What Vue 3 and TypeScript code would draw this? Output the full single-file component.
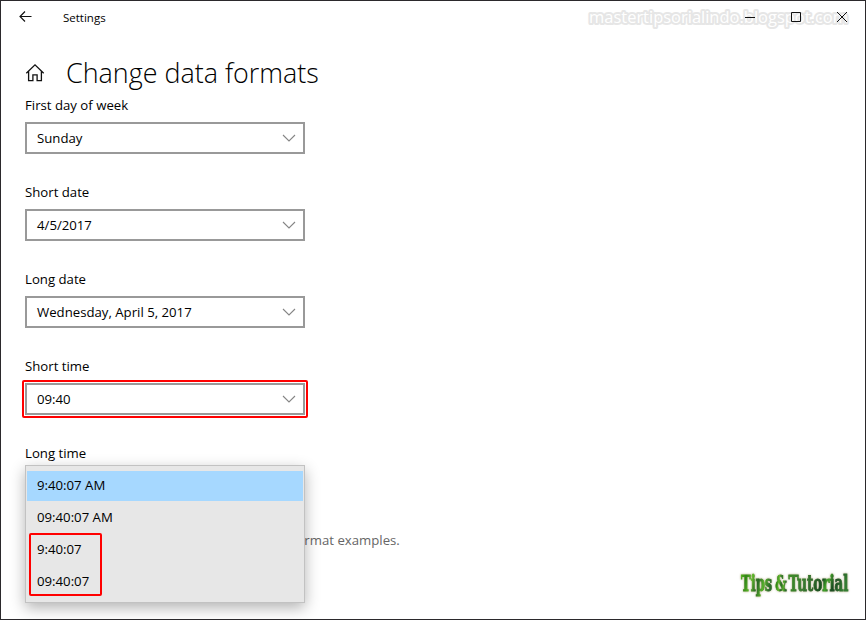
<script setup lang="ts">
interface Field {
  label: string
  value: string
  marked?: boolean
}

const fields: Field[] = [
  { label: 'First day of week', value: 'Sunday' },
  { label: 'Short date', value: '4/5/2017' },
  { label: 'Long date', value: 'Wednesday, April 5, 2017' },
  { label: 'Short time', value: '09:40', marked: true },
]

const options: string[] = ['9:40:07 AM', '09:40:07 AM', '9:40:07', '09:40:07']
const selected = 0
</script>

<template>
  <div class="window">
    <header class="titlebar">
      <svg class="back" width="14" height="12" viewBox="0 0 14 12">
        <path d="M12.5 5.5H1M6 .5L1 5.5l5 5" fill="none" stroke="#111" stroke-width="1.15" />
      </svg>
      <span class="app-name">Settings</span>
      <div class="controls">
        <svg width="12" height="12" viewBox="0 0 12 12"><path d="M1 6.5h10" /></svg>
        <svg width="12" height="12" viewBox="0 0 12 12"><path d="M1.5 1.5h9v9h-9z" /></svg>
        <svg width="12" height="12" viewBox="0 0 12 12"><path d="M1 1l10 10M11 1L1 11" /></svg>
      </div>
      <svg class="watermark" width="280" height="30" viewBox="0 0 280 30">
        <text x="5" y="18" textLength="259" lengthAdjust="spacingAndGlyphs">mastertipsorialindo.blogspot.com</text>
      </svg>
    </header>

    <main class="content">
      <div class="heading">
        <svg class="home" width="20" height="20" viewBox="0 0 20 20">
          <path d="M1.3 10.3L10 1.9l8.7 8.4M3.6 8.5v9.2h4.3v-5.9h4.2v5.9h4.3V8.5" fill="none" stroke="#111" stroke-width="1.3" />
        </svg>
        <h1>Change data formats</h1>
      </div>

      <section v-for="f in fields" :key="f.label" class="field">
        <label>{{ f.label }}</label>
        <div class="select" :class="{ marked: f.marked }">
          <span>{{ f.value }}</span>
          <svg width="14" height="8" viewBox="0 0 14 8">
            <path d="M1 1l6 6 6-6" fill="none" stroke="#858585" stroke-width="1.1" />
          </svg>
        </div>
      </section>

      <section class="field">
        <label>Long time</label>
        <div class="select">
          <ul class="menu">
            <li v-for="(o, i) in options" :key="o" :class="{ active: i === selected }">{{ o }}</li>
            <li class="mark" aria-hidden="true"></li>
          </ul>
        </div>
      </section>

      <p class="hint">format examples.</p>
    </main>

    <svg class="logo" width="122" height="36" viewBox="0 0 122 36">
      <defs>
        <linearGradient id="leaf" x1="0" y1="0" x2="1" y2="0.2">
          <stop offset="0" stop-color="#5dbb1d" />
          <stop offset="0.2" stop-color="#2f8415" />
          <stop offset="0.4" stop-color="#62b92d" />
          <stop offset="0.6" stop-color="#286525" />
          <stop offset="0.8" stop-color="#57b02a" />
          <stop offset="1" stop-color="#2c6a2a" />
        </linearGradient>
        <linearGradient id="forest" x1="0" y1="0" x2="1" y2="0.15">
          <stop offset="0" stop-color="#3e8c26" />
          <stop offset="0.3" stop-color="#397c30" />
          <stop offset="0.5" stop-color="#2b6428" />
          <stop offset="0.62" stop-color="#174d1e" />
          <stop offset="0.7" stop-color="#42a52a" />
          <stop offset="0.82" stop-color="#1b4921" />
          <stop offset="1" stop-color="#347c32" />
        </linearGradient>
      </defs>
      <g transform="scale(0.6 1)">
        <text x="10" y="22" textLength="52" lengthAdjust="spacingAndGlyphs" fill="url(#leaf)" stroke="url(#leaf)">Tips</text>
        <text x="67" y="22" textLength="19" lengthAdjust="spacingAndGlyphs" fill="url(#leaf)" stroke="url(#leaf)">&amp;</text>
        <text x="89" y="22" textLength="100" lengthAdjust="spacingAndGlyphs" fill="url(#forest)" stroke="url(#forest)">Tutorial</text>
      </g>
    </svg>
  </div>
</template>

<style>
body {
  margin: 0;
}
</style>

<style scoped>
.window {
  position: relative;
  box-sizing: border-box;
  width: 866px;
  height: 620px;
  overflow: hidden;
  border: 1px solid #2b292c;
  background: #fff;
  color: #000;
  font: 13.2px/20px "Open Sans", "Noto Sans", sans-serif;
}
.titlebar {
  position: relative;
  display: flex;
  align-items: center;
  height: 32px;
  padding: 0 17px 0 18px;
}
.back {
  margin-right: 30px;
}
.app-name {
  font-size: 11.5px;
  padding-top: 1px;
}
.controls {
  display: flex;
  gap: 34px;
  margin-left: auto;
  position: relative;
  z-index: 1;
}
.controls path {
  fill: none;
  stroke: #111;
  stroke-width: 1;
}
.watermark {
  position: absolute;
  right: 1px;
  top: 4px;
}
.watermark text {
  font-size: 16.5px;
  fill: #fff;
  stroke: #e6e6e6;
  stroke-width: 4px;
  stroke-linejoin: round;
  paint-order: stroke;
}
.content {
  padding: 21px 24px 0;
}
.heading {
  display: flex;
  align-items: center;
  height: 38px;
  gap: 21px;
  margin-bottom: 3px;
}
h1 {
  margin: 0;
  font-size: 26.9px;
  font-weight: 300;
  line-height: 38px;
}
.field {
  display: flex;
  flex-direction: column;
  gap: 7px;
  margin-bottom: 28px;
}
.field label {
  height: 20px;
}
.select {
  position: relative;
  box-sizing: border-box;
  display: flex;
  align-items: center;
  justify-content: space-between;
  width: 280px;
  height: 32px;
  padding: 0 7px 0 10px;
  border: 2px solid #999;
}
.marked::after {
  content: "";
  position: absolute;
  inset: -5px;
  border: 2px solid #f00;
  border-radius: 2px;
}
.menu {
  position: absolute;
  z-index: 2;
  left: -2px;
  top: -7px;
  box-sizing: border-box;
  width: 280px;
  height: 138px;
  margin: 0;
  padding: 5px 1px;
  border: 1px solid #c2c2c2;
  background: #e7e7e7;
  box-shadow: 0 5px 14px rgba(0, 0, 0, 0.3);
  list-style: none;
}
.menu li {
  height: 32px;
  padding-left: 10px;
  line-height: 29px;
}
.menu li.active {
  background: linear-gradient(#a6d8ff 30px, transparent 30px);
}
.menu li.mark {
  position: absolute;
  box-sizing: border-box;
  left: 3px;
  top: 67px;
  width: 73px;
  height: 63px;
  padding: 0;
  border: 2px solid #f00;
  border-radius: 2px;
}
.hint {
  margin: 0;
  padding-left: 267px;
  color: #666;
}
.logo {
  position: absolute;
  left: 734px;
  top: 568px;
  filter: drop-shadow(0 0 1px #b5ab86);
}
.logo text {
  font-family: "DejaVu Serif", "Liberation Serif", serif;
  font-size: 22.5px;
  font-weight: 700;
  stroke-width: 0.9px;
}
</style>
